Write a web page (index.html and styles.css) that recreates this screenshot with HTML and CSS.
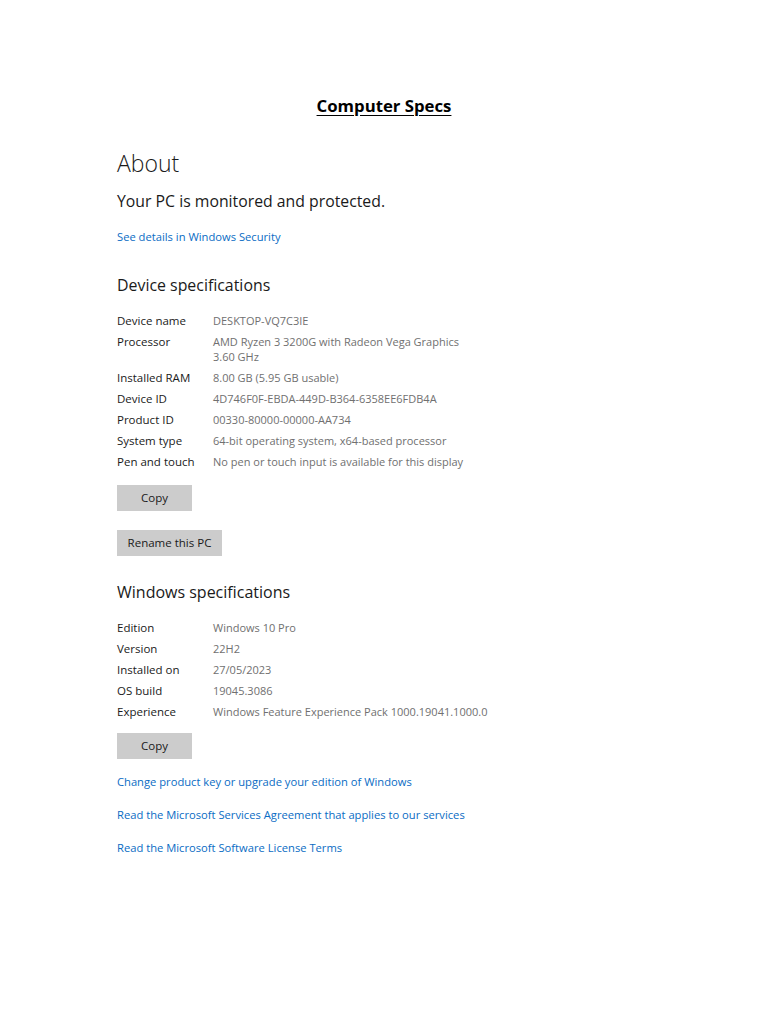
FILE: index.html
```html
<!DOCTYPE html>
<html>
<head>
<meta charset="utf-8">
<link rel="stylesheet" href="styles.css">
</head>
<body>
<div class="page">
  <h1 class="title">Computer Specs</h1>
  <h2 class="about">About</h2>
  <p class="status">Your PC is monitored and protected.</p>
  <a class="link first">See details in Windows Security</a>

  <h3 class="section">Device specifications</h3>
  <div class="specs">
    <div class="label">Device name</div><div class="value">DESKTOP-VQ7C3IE</div>
    <div class="label">Processor</div><div class="value">AMD Ryzen 3 3200G with Radeon Vega Graphics<br>3.60 GHz</div>
    <div class="label">Installed RAM</div><div class="value">8.00 GB (5.95 GB usable)</div>
    <div class="label">Device ID</div><div class="value">4D746F0F-EBDA-449D-B364-6358EE6FDB4A</div>
    <div class="label">Product ID</div><div class="value">00330-80000-00000-AA734</div>
    <div class="label">System type</div><div class="value">64-bit operating system, x64-based processor</div>
    <div class="label">Pen and touch</div><div class="value">No pen or touch input is available for this display</div>
  </div>
  <div class="btn copy">Copy</div>
  <div class="btn rename">Rename this PC</div>

  <h3 class="section win">Windows specifications</h3>
  <div class="specs second">
    <div class="label">Edition</div><div class="value">Windows 10 Pro</div>
    <div class="label">Version</div><div class="value">22H2</div>
    <div class="label">Installed on</div><div class="value">27/05/2023</div>
    <div class="label">OS build</div><div class="value">19045.3086</div>
    <div class="label">Experience</div><div class="value">Windows Feature Experience Pack 1000.19041.1000.0</div>
  </div>
  <div class="btn copy copy-win">Copy</div>

  <div class="links">
    <a class="link">Change product key or upgrade your edition of Windows</a>
    <a class="link">Read the Microsoft Services Agreement that applies to our services</a>
    <a class="link">Read the Microsoft Software License Terms</a>
  </div>
</div>
</body>
</html>
```

FILE: styles.css
```css
html, body {
  margin: 0;
  padding: 0;
  background: #ffffff;
}
body {
  font-family: "Open Sans", "Noto Sans", sans-serif;
  color: #1a1a1a;
}
.page {
  padding: 93px 0 0 117px;
  display: flex;
  flex-direction: column;
  align-items: flex-start;
}
.title {
  align-self: stretch;
  margin: 0 117px 0 0;
  text-align: center;
  font-family: "Open Sans", sans-serif;
  font-weight: 700;
  font-size: 16.75px;
  line-height: 26px;
  text-decoration: underline;
  text-underline-offset: 3px;
  color: #000;
}
.about {
  margin: 28px 0 0 0;
  font-weight: 300;
  font-size: 23px;
  line-height: 32px;
  color: #1a1a1a;
}
.status {
  margin: 11px 0 0 0;
  font-size: 15.8px;
  line-height: 22px;
  color: #1a1a1a;
}
.link {
  display: block;
  font-size: 11.2px;
  line-height: 16px;
  color: #0a6cc4;
  text-decoration: none;
}
.first {
  margin-top: 17px;
}
.section {
  margin: 28px 0 0 0;
  font-weight: 400;
  font-size: 15.9px;
  line-height: 24px;
  color: #1a1a1a;
}
.section.win {
  margin-top: 24px;
  font-size: 16px;
}
.specs {
  margin-top: 15.5px;
  display: grid;
  grid-template-columns: 96px auto;
  row-gap: 6px;
  font-size: 11.5px;
  line-height: 15px;
}
.specs.second {
  margin-top: 16.5px;
}
.label {
  color: #1a1a1a;
}
.value {
  color: #707070;
  font-size: 11px;
}
.btn {
  margin-top: 16px;
  background: #cccccc;
  height: 26px;
  line-height: 26px;
  font-size: 11.5px;
  color: #1a1a1a;
  text-align: center;
}
.btn.copy {
  width: 75px;
}
.btn.copy-win {
  margin-top: 14px;
}
.btn.rename {
  margin-top: 19px;
  width: 105px;
}
.links {
  margin-top: 15px;
  display: flex;
  flex-direction: column;
  gap: 17px;
}
```
